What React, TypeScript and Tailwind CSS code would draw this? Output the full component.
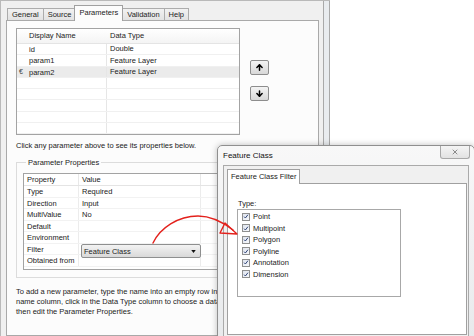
import { ArrowDown, ArrowUp, X } from "lucide-react"

const params = [
  { name: "id", type: "Double", current: false },
  { name: "param1", type: "Feature Layer", current: false },
  { name: "param2", type: "Feature Layer", current: true },
]

const properties = [
  { label: "Type", value: "Required" },
  { label: "Direction", value: "Input" },
  { label: "MultiValue", value: "No" },
  { label: "Default", value: "" },
  { label: "Environment", value: "" },
  { label: "Filter", value: "dropdown" },
  { label: "Obtained from", value: "" },
]

const types = ["Point", "Multipoint", "Polygon", "Polyline", "Annotation", "Dimension"]

const tabs = ["General", "Source", "Parameters", "Validation", "Help"]

function Checkbox() {
  return (
    <span className="flex h-[8px] w-[8px] items-center justify-center border border-[#8e8f8f] bg-gradient-to-br from-[#dfe4ee] to-[#f6f8fb]">
      <svg viewBox="0 0 8 8" className="h-[7px] w-[7px]">
        <path d="M1.5 4.2 L3.2 6 L6.6 1.6" fill="none" stroke="#2a3f73" strokeWidth="1.3" />
      </svg>
    </span>
  )
}

function ParameterTable() {
  return (
    <div className="flex h-[107px] w-[224px] flex-col border border-[#a3a3a3] bg-white">
      {/* header */}
      <div className="flex h-[15px] items-center border-b border-[#e4e4e4] bg-gradient-to-b from-white to-[#f4f4f4]">
        <span className="w-[12px]" />
        <span className="w-[78px]">Display Name</span>
        <span className="pl-[3px]">Data Type</span>
      </div>
      {params.map((p) => (
        <div
          key={p.name}
          className={`flex h-[11.5px] items-center border-b border-[#f0f0f0] ${p.current ? "bg-[#ebebeb]" : ""}`}
        >
          <span className="w-[12px] pl-[2px] text-[7px] text-[#444]">{p.current ? "€" : ""}</span>
          <span className="h-full w-[78px] border-r border-[#e6e6e6] leading-[11.5px]">{p.name}</span>
          <span className="pl-[3px]">{p.type}</span>
        </div>
      ))}
      {[0, 1, 2, 3, 4].map((i) => (
        <div key={i} className="flex h-[11.5px] border-b border-[#f0f0f0]">
          <span className="w-[12px]" />
          <span className="h-full w-[78px] border-r border-[#e6e6e6]" />
        </div>
      ))}
    </div>
  )
}

function MoveButton({ down }: { down?: boolean }) {
  return (
    <div className="flex h-[15px] w-[19px] items-center justify-center rounded-[2px] border border-[#8d8d8d] bg-gradient-to-b from-[#f4f4f4] to-[#d8d8d8]">
      {down ? (
        <ArrowDown className="h-[9px] w-[9px] text-black" strokeWidth={4} />
      ) : (
        <ArrowUp className="h-[9px] w-[9px] text-black" strokeWidth={4} />
      )}
    </div>
  )
}

function PropertyGrid() {
  return (
    <div className="flex h-[97px] w-[284px] flex-col border border-[#a3a3a3] bg-white">
      <div className="flex h-[12px] items-center border-b border-[#e4e4e4]">
        <span className="h-full w-[55px] border-r border-[#e8e8e8] pl-[3px] leading-[12px]">Property</span>
        <span className="h-full w-[122px] border-r border-[#e8e8e8] pl-[3px] leading-[12px]">Value</span>
      </div>
      {properties.map((p) => (
        <div key={p.label} className="flex h-[11.5px] items-center border-b border-[#f2f2f2]">
          <span className="h-full w-[55px] shrink-0 whitespace-nowrap border-r border-[#ececec] pl-[3px] leading-[11.5px]">
            {p.label}
          </span>
          {p.value === "dropdown" ? (
            <div className="relative z-10 ml-[2px] mt-[5px] flex h-[14px] w-[120px] shrink-0 items-center justify-between rounded-[2px] border border-[#8e8f8f] bg-gradient-to-b from-[#f3f3f3] to-[#d9d9d9] pl-[2px] pr-[4px]">
              <span>Feature Class</span>
              <svg viewBox="0 0 6 4" className="h-[3px] w-[5px]">
                <path d="M0 0 H6 L3 4 Z" fill="#111" />
              </svg>
            </div>
          ) : (
            <span className="h-full w-[122px] border-r border-[#ececec] pl-[3px] leading-[11.5px]">{p.value}</span>
          )}
        </div>
      ))}
    </div>
  )
}

function ToolWindow() {
  return (
    <div className="absolute left-0 top-0 flex h-[336px] w-[330px] border-l border-t border-[#b9b9b9] bg-[#f0f0f0]">
      <div className="flex w-[318px] flex-col pl-[5px] pt-[4px]">
        {/* tabs */}
        <div className="flex items-end pl-[1px]">
          {tabs.map((t) =>
            t === "Parameters" ? (
              <div
                key={t}
                className="relative z-10 -mb-px -mx-[1px] flex h-[16px] items-start border border-b-0 border-[#a0a0a0] bg-[#fcfcfc] px-[4px] pt-[1px]"
              >
                {t}
              </div>
            ) : (
              <div
                key={t}
                className="flex h-[12px] items-center border border-b-0 border-r-0 border-[#acacac] bg-gradient-to-b from-[#f2f2f2] to-[#e2e2e2] px-[4px] last:border-r"
              >
                {t}
              </div>
            ),
          )}
        </div>
        {/* tab page */}
        <div className="flex flex-1 flex-col border border-[#a9a9a9] bg-[#fcfcfc] pl-[9px] pt-[7px]">
          <div className="flex">
            <ParameterTable />
            <div className="ml-[10px] flex flex-col gap-[11px] pt-[32px]">
              <MoveButton />
              <MoveButton down />
            </div>
          </div>
          <p className="mt-[6px] leading-[9px]">Click any parameter above to see its properties below.</p>
          <fieldset className="mt-[8px] w-[296px] border border-[#dcdcdc] pb-[7px] pl-[6px] pt-[6px]">
            <legend className="ml-[3px] px-[2px] leading-[9px]">Parameter Properties</legend>
            <PropertyGrid />
          </fieldset>
          <p className="mt-[9px] whitespace-nowrap leading-[10px]">
            To add a new parameter, type the name into an empty row in the
            <br />
            name column, click in the Data Type column to choose a data type,
            <br />
            then edit the Parameter Properties.
          </p>
        </div>
      </div>
      <div className="w-[4px]" />
      <div className="w-[7px] border-x border-[#a9a9a9] bg-[#e9ecef]" />
    </div>
  )
}

function FeatureClassDialog() {
  return (
    <div className="absolute left-[217px] top-[145px] flex h-[195px] w-[258px] flex-col rounded-t-[5px] border border-[#8f8f8f] bg-gradient-to-b from-[#f8f8f8] to-[#e8eaec] shadow-[0_0_6px_rgba(0,0,0,0.25)]">
      <div className="flex h-[19px] items-start justify-between pl-[5px]">
        <span className="mt-[5px] text-[8px] leading-[10px] text-[#111]">Feature Class</span>
        <div className="mr-[4px] flex h-[13px] w-[30px] items-center justify-center rounded-b-[3px] border border-t-0 border-[#a8a8a8] bg-gradient-to-b from-[#f4f4f4] to-[#e2e2e2]">
          <X className="h-[8px] w-[8px] text-[#8a8a8a]" strokeWidth={3} />
        </div>
      </div>
      <div className="mx-[5px] flex flex-1 flex-col border border-b-0 border-[#aaaaaa] bg-[#f0f0f0] pl-[3px] pr-[1px] pt-[3px]">
        <div className="flex">
          <div className="relative z-10 -mb-px flex h-[15px] items-center border border-b-0 border-[#a0a0a0] bg-white px-[3px]">
            Feature Class Filter
          </div>
        </div>
        <div className="mb-[4px] flex flex-1 flex-col border border-[#a0a0a0] bg-white pl-[9px] pt-[15px]">
          <span className="pl-[1px] leading-[9px]">Type:</span>
          <div className="mt-[1px] flex h-[88px] w-[164px] flex-col border border-[#a8a8a8] bg-white pl-[4px] pt-[1px]">
            {types.map((t) => (
              <div key={t} className="flex h-[11.5px] items-center gap-[3px]">
                <Checkbox />
                <span>{t}</span>
              </div>
            ))}
          </div>
        </div>
      </div>
    </div>
  )
}

export default function App() {
  return (
    <div className="relative h-[336px] w-[474px] overflow-hidden bg-white font-['Liberation_Sans',Arial,sans-serif] text-[7.5px] text-[#222]">
      <ToolWindow />
      <FeatureClassDialog />
      {/* red hand-drawn arrow */}
      <svg className="pointer-events-none absolute left-0 top-0 z-20" width="474" height="336">
        <path
          d="M153 243 C160 228 178 216 198 216 C212 216 224 223 233 230"
          fill="none"
          stroke="#e3211c"
          strokeWidth="1.4"
          strokeLinecap="round"
        />
        <path d="M225 223 L220 233 L237 234 Z" fill="none" stroke="#e3211c" strokeWidth="1.4" strokeLinejoin="round" />
      </svg>
    </div>
  )
}
